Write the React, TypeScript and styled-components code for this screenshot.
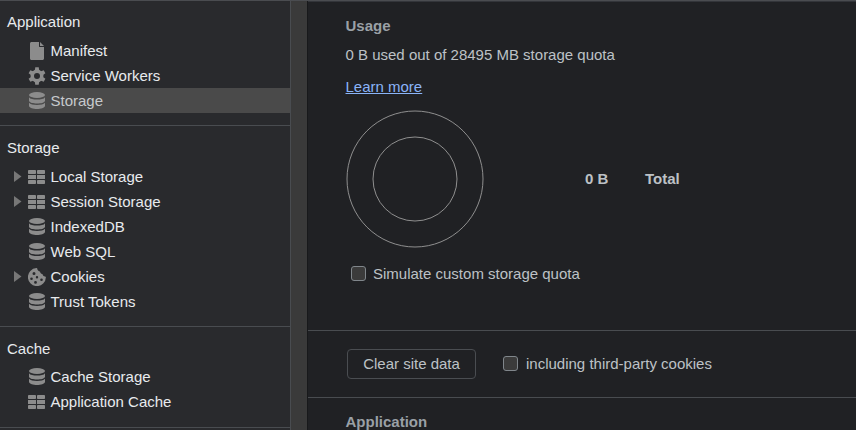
import React from "react";
import styled, { createGlobalStyle } from "styled-components";

const Global = createGlobalStyle`
  html, body { margin: 0; height: 100%; background: #202124; overflow: hidden; }
  body { font-family: "Liberation Sans", Arial, sans-serif; font-size: 15px; }
`;

const Page = styled.div`
  display: flex;
  width: 856px;
  height: 430px;
  overflow: hidden;
  background: #202124;
  border-top: 1px solid #4a4c50;
  box-sizing: border-box;
`;

const Sidebar = styled.nav`
  width: 290px;
  flex: none;
  background: #292a2d;
  color: #e8eaed;
`;

const Section = styled.section<{ $height: number; $offset: number }>`
  height: ${(p) => p.$height}px;
  padding-top: ${(p) => p.$offset}px;
  border-bottom: 1px solid #494c50;
`;

const SectionTitle = styled.h3<{ $pad: number }>`
  margin: 0;
  height: 37px;
  padding: ${(p) => p.$pad}px 0 0 7px;
  box-sizing: border-box;
  font-size: 15px;
  line-height: 26px;
  font-weight: 400;
  color: #e8eaed;
`;

const Row = styled.div<{ $selected?: boolean }>`
  height: 25px;
  display: flex;
  align-items: center;
  background: ${(p) => (p.$selected ? "#4a4a4a" : "transparent")};
  color: ${(p) => (p.$selected ? "#c6c9cc" : "#e8eaed")};
`;

const ArrowSlot = styled.span`
  width: 24px;
  height: 25px;
  flex: none;
  display: flex;
  align-items: center;
  padding-left: 14px;
  box-sizing: border-box;
`;

const IconSlot = styled.span`
  width: 25px;
  height: 25px;
  flex: none;
  margin-right: 1.5px;
  display: flex;
  align-items: center;
  justify-content: center;
  color: #8c8c8c;
`;

const Splitter = styled.div`
  width: 18px;
  flex: none;
  background: #3a3a3a;
  border-left: 1px solid #494c50;
  border-right: 1px solid #18191b;
  box-sizing: border-box;
`;

const Main = styled.main`
  flex: 1;
  min-width: 0;
  background: #202124;
  color: #bdc1c6;
  box-shadow: inset 0 1px 0 #33353a;
`;

const UsageBlock = styled.div`
  height: 329px;
  padding: 0 37.5px;
  border-bottom: 1px solid #494c50;
`;

const Heading = styled.div`
  height: 17px;
  line-height: 17px;
  font-weight: 700;
  font-size: 15px;
  color: #9aa0a6;
`;

const UsageHeading = styled(Heading)`
  padding-top: 16px;
`;

const Quota = styled.div`
  margin-top: 12px;
  line-height: 17px;
`;

const LearnMore = styled.a`
  display: block;
  width: max-content;
  margin-top: 15px;
  line-height: 17px;
  color: #8ab4f8;
  text-decoration: underline;
`;

const ChartRow = styled.div`
  display: flex;
  align-items: center;
  margin-top: 15px;
  height: 138px;
`;

const ChartSvg = styled.svg`
  width: 138px;
  height: 138px;
  flex: none;
`;

const Legend = styled.div`
  display: flex;
  margin-left: 101.5px;
  padding-bottom: 1px;
  font-weight: 700;
  line-height: 17px;
  color: #bdc1c6;
`;

const LegendValue = styled.span`
  width: 60px;
`;

const CheckLabel = styled.label`
  display: flex;
  align-items: center;
  line-height: 17px;
  color: #bdc1c6;
`;

const SimulateLabel = styled(CheckLabel)`
  margin: 17px 0 0 5.5px;
`;

const ThirdPartyLabel = styled(CheckLabel)`
  margin-bottom: 1px;
`;

const Box = styled.span<{ $gap: number }>`
  width: 13px;
  height: 13px;
  flex: none;
  border: 1px solid #80868b;
  border-radius: 3px;
  background: #3b3b3b;
  margin-right: ${(p) => p.$gap}px;
`;

const ActionsBlock = styled.div`
  height: 66px;
  display: flex;
  align-items: center;
  padding: 0 39px;
  border-bottom: 1px solid #494c50;
`;

const ClearButton = styled.button`
  width: 129px;
  height: 30px;
  flex: none;
  padding: 0 0 2px;
  margin-right: 27px;
  background: transparent;
  border: 1px solid #4a4d51;
  border-radius: 4px;
  color: #bdc1c6;
  font: inherit;
`;

const AppBlock = styled.div`
  padding: 15px 37.5px 0;
`;

const Triangle = () => (
  <svg width="8" height="11" viewBox="0 0 8 11"><path d="M0 0 L7.500 5.500 L0 11 Z" fill="#777" /></svg>
);

const FileIcon = () => (
  <svg width="14" height="18" viewBox="0 0 14 18"><path d="M1.500 0H9v4.500c0 .3.2.5.5.5H14v11.500c0 .8-.7 1.500-1.500 1.500h-11C.7 18 0 17.300 0 16.500v-15C0 .7.7 0 1.500 0ZM10 0l4 4h-4Z" fill="currentColor" /></svg>
);

const GearIcon = () => (
  <svg width="18" height="18" viewBox="-12 -12 24 24" fill="currentColor">
    <circle r="6.300" fill="none" stroke="currentColor" strokeWidth="4.600" />
    {[0, 60, 120, 180, 240, 300].map((a) => (
      <path key={a} d="M-2.300 -11.600H2.300L3 -7H-3Z" transform={`rotate(${a})`} />
    ))}
  </svg>
);

const DbIcon = () => (
  <svg width="16" height="17" viewBox="0 0 16 17" fill="currentColor">
    <ellipse cx="8" cy="3" rx="8" ry="3" />
    <path d="M0 5.200C1 7 4.500 7.600 8 7.600s7-.6 8-2.400V9c-.6 1.700-4 2.500-8 2.500S.6 10.700 0 9Z" />
    <path d="M0 10.800c1.200 1.600 4.500 2.200 8 2.200s6.800-.6 8-2.200v3.200c-.6 1.900-4 3-8 3s-7.400-1.100-8-3Z" />
  </svg>
);

const GridIcon = () => (
  <svg width="17" height="14" viewBox="0 0 17 14" fill="currentColor">
    <rect x="0" y="0" width="8" height="4" rx=".8" />
    <rect x="9" y="0" width="8" height="4" rx=".8" />
    <rect x="0" y="5" width="8" height="4" />
    <rect x="9" y="5" width="8" height="4" />
    <rect x="0" y="10" width="8" height="4" rx=".8" />
    <rect x="9" y="10" width="8" height="4" rx=".8" />
  </svg>
);

const CookieIcon = () => (
  <svg width="18" height="18" viewBox="0 0 18 18">
    <path fillRule="evenodd" fill="currentColor" d="M8.500.1C9 0 9.300.4 9.300.8c.1 1.300 1.100 2.400 2.400 2.600.3 0 .5.300.5.600.1 1 .9 1.800 1.900 1.900.3 0 .6.200.6.500.2 1.100 1.200 1.900 2.300 2 .5 0 .9.400.9.900A9 9 0 1 1 8.500.1ZM6 4a1.500 1.500 0 1 0 0 3 1.500 1.500 0 0 0 0-3Zm-2.500 5.500a1.300 1.300 0 1 0 0 2.600 1.300 1.300 0 0 0 0-2.600ZM9 8a1.200 1.200 0 1 0 0 2.400A1.200 1.200 0 0 0 9 8Zm4.500 2.500a1.300 1.300 0 1 0 0 2.600 1.300 1.300 0 0 0 0-2.600ZM7.500 13a1.400 1.400 0 1 0 0 2.800 1.400 1.400 0 0 0 0-2.800Z" />
  </svg>
);

type Item = { label: string; icon: React.ReactNode; arrow?: boolean; selected?: boolean };

const groups: { title: string; height: number; offset: number; pad: number; items: Item[] }[] = [
  {
    title: "Application",
    height: 124,
    offset: 0,
    pad: 8,
    items: [
      { label: "Manifest", icon: <FileIcon /> },
      { label: "Service Workers", icon: <GearIcon /> },
      { label: "Storage", icon: <DbIcon />, selected: true },
    ],
  },
  {
    title: "Storage",
    height: 199,
    offset: 1,
    pad: 8,
    items: [
      { label: "Local Storage", icon: <GridIcon />, arrow: true },
      { label: "Session Storage", icon: <GridIcon />, arrow: true },
      { label: "IndexedDB", icon: <DbIcon /> },
      { label: "Web SQL", icon: <DbIcon /> },
      { label: "Cookies", icon: <CookieIcon />, arrow: true },
      { label: "Trust Tokens", icon: <DbIcon /> },
    ],
  },
  {
    title: "Cache",
    height: 100,
    offset: 0,
    pad: 9,
    items: [
      { label: "Cache Storage", icon: <DbIcon /> },
      { label: "Application Cache", icon: <GridIcon /> },
    ],
  },
];

export default function App() {
  return (
    <Page>
      <Global />
      <Sidebar>
        {groups.map((g) => (
          <Section key={g.title} $height={g.height} $offset={g.offset}>
            <SectionTitle $pad={g.pad}>{g.title}</SectionTitle>
            {g.items.map((it) => (
              <Row key={it.label} $selected={it.selected}>
                <ArrowSlot>{it.arrow && <Triangle />}</ArrowSlot>
                <IconSlot>{it.icon}</IconSlot>
                {it.label}
              </Row>
            ))}
          </Section>
        ))}
      </Sidebar>
      <Splitter />
      <Main>
        <UsageBlock>
          <UsageHeading>Usage</UsageHeading>
          <Quota>0 B used out of 28495 MB storage quota</Quota>
          <LearnMore>Learn more</LearnMore>
          <ChartRow>
            <ChartSvg viewBox="0 0 138 138">
              <circle cx="69" cy="69" r="68" fill="none" stroke="#8f8f8f" />
              <circle cx="69" cy="69" r="42" fill="none" stroke="#8f8f8f" />
            </ChartSvg>
            <Legend>
              <LegendValue>0 B</LegendValue>
              <span>Total</span>
            </Legend>
          </ChartRow>
          <SimulateLabel><Box $gap={7} />Simulate custom storage quota</SimulateLabel>
        </UsageBlock>
        <ActionsBlock>
          <ClearButton>Clear site data</ClearButton>
          <ThirdPartyLabel><Box $gap={8} />including third-party cookies</ThirdPartyLabel>
        </ActionsBlock>
        <AppBlock>
          <Heading>Application</Heading>
        </AppBlock>
      </Main>
    </Page>
  );
}
